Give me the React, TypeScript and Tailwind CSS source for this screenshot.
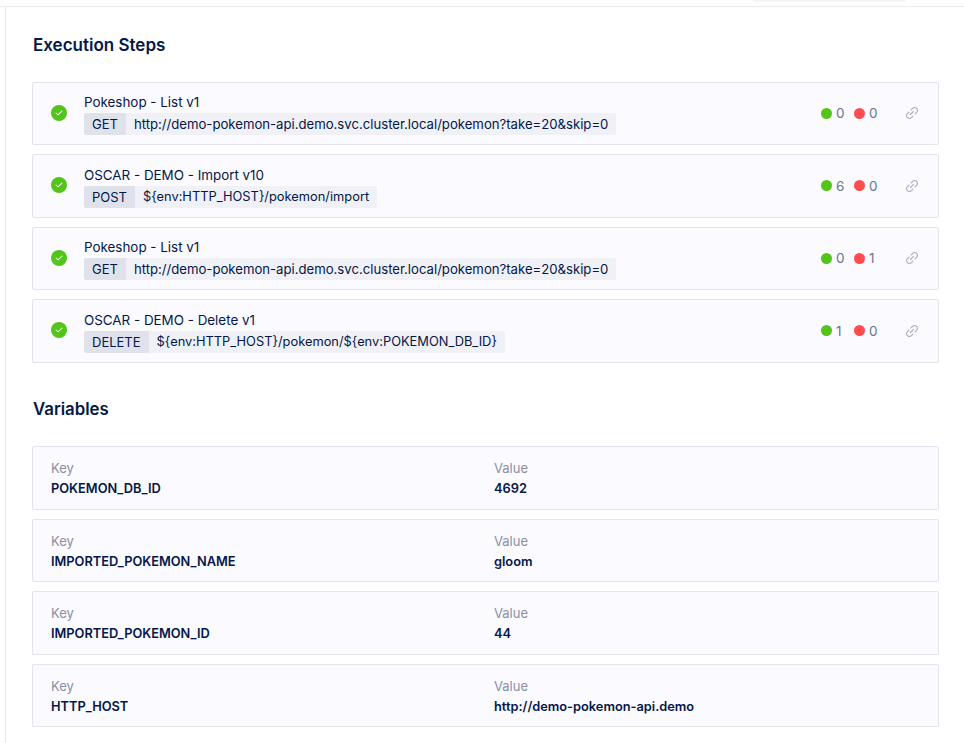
import { AiOutlineLink } from "react-icons/ai";
import { FaCheck } from "react-icons/fa6";

const steps = [
  { name: "Pokeshop - List v1", method: "GET", url: "http://demo-pokemon-api.demo.svc.cluster.local/pokemon?take=20&skip=0", urlSize: "text-[13.15px]", pass: 0, fail: 0 },
  { name: "OSCAR - DEMO - Import v10", method: "POST", url: "${env:HTTP_HOST}/pokemon/import", urlSize: "text-[12.85px]", pass: 6, fail: 0 },
  { name: "Pokeshop - List v1", method: "GET", url: "http://demo-pokemon-api.demo.svc.cluster.local/pokemon?take=20&skip=0", urlSize: "text-[13.15px]", pass: 0, fail: 1 },
  { name: "OSCAR - DEMO - Delete v1", method: "DELETE", url: "${env:HTTP_HOST}/pokemon/${env:POKEMON_DB_ID}", urlSize: "text-[12.85px]", pass: 1, fail: 0 },
];

const variables = [
  { k: "POKEMON_DB_ID", v: "4692" },
  { k: "IMPORTED_POKEMON_NAME", v: "gloom" },
  { k: "IMPORTED_POKEMON_ID", v: "44" },
  { k: "HTTP_HOST", v: "http://demo-pokemon-api.demo" },
];

function StepRow({ step }: { step: (typeof steps)[number] }) {
  return (
    <div className="flex items-center h-[63.5px] mb-[9px] pl-[18px] pr-[18px] bg-[#fbfaff] border border-[#e4e3ee] rounded-[2px]">
      <div className="mb-[2px] w-4 h-4 rounded-full bg-[#52c41a] flex items-center justify-center">
        <FaCheck className="w-2 h-2 text-white" />
      </div>
      <div className="ml-[17px] flex-1 min-w-0">
        <div className="text-[13.4px] leading-[20px] text-[#031849]">{step.name}</div>
        <div className="flex mt-px h-[22px] items-stretch text-[13px] leading-[22px] text-[#031849]">
          <span className="px-2 bg-[#e0e2eb] rounded-l-[2px]">{step.method}</span>
          <span className={`px-2 bg-[#f0f0f7] rounded-r-[2px] ${step.urlSize}`}>{step.url}</span>
        </div>
      </div>
      <div className="pb-[0.6px] flex items-center text-[13.5px] text-[#687492]">
        <span className="w-[11px] h-[11px] rounded-full bg-[#52c41a]" />
        <span className="ml-[4px] w-[9px]">{step.pass}</span>
        <span className="ml-[9px] w-[11px] h-[11px] rounded-full bg-[#ff4d4f]" />
        <span className="ml-[4px] w-[9px]">{step.fail}</span>
        <AiOutlineLink className="ml-[26px] w-4 h-4 text-[#a9aec0]" />
      </div>
    </div>
  );
}

function VariableRow({ k, v }: { k: string; v: string }) {
  return (
    <div className="flex items-center h-[63.5px] mb-[9px] pl-[18px] bg-[#fbfaff] border border-[#e4e3ee] rounded-[2px]">
      <div className="w-[443px] pt-px">
        <div className="text-[13px] leading-[20px] text-[#8b8f9f]">Key</div>
        <div className="mt-px text-[12.8px] leading-[20px] font-semibold text-[#031849]">{k}</div>
      </div>
      <div className="pt-px">
        <div className="text-[13px] leading-[20px] text-[#8b8f9f]">Value</div>
        <div className="mt-px text-[12.8px] leading-[20px] font-semibold text-[#031849]">{v}</div>
      </div>
    </div>
  );
}

export default function App() {
  return (
    <div className="h-[743px] overflow-hidden bg-white font-['Inter',sans-serif]">
      <div className="h-[7px] border-b border-[#e8e8f0] flex justify-end pr-[58px]">
        <div className="w-[153px] h-[2px] bg-[#f5f5f5]" />
      </div>
      <div className="ml-[5px] h-full border-l border-[#e8e8f0] pl-[26px] pr-[25px] pt-[26px]">
        <h2 className="pl-px mb-[24.9px] text-[17px] leading-[24px] font-semibold text-[#031849]">Execution Steps</h2>
        {steps.map((s, i) => (
          <StepRow key={i} step={s} />
        ))}
        <h2 className="pl-px mt-[34.5px] mb-[24.9px] text-[16.8px] leading-[24px] font-semibold text-[#031849]">Variables</h2>
        {variables.map((r) => (
          <VariableRow key={r.k} k={r.k} v={r.v} />
        ))}
      </div>
    </div>
  );
}
